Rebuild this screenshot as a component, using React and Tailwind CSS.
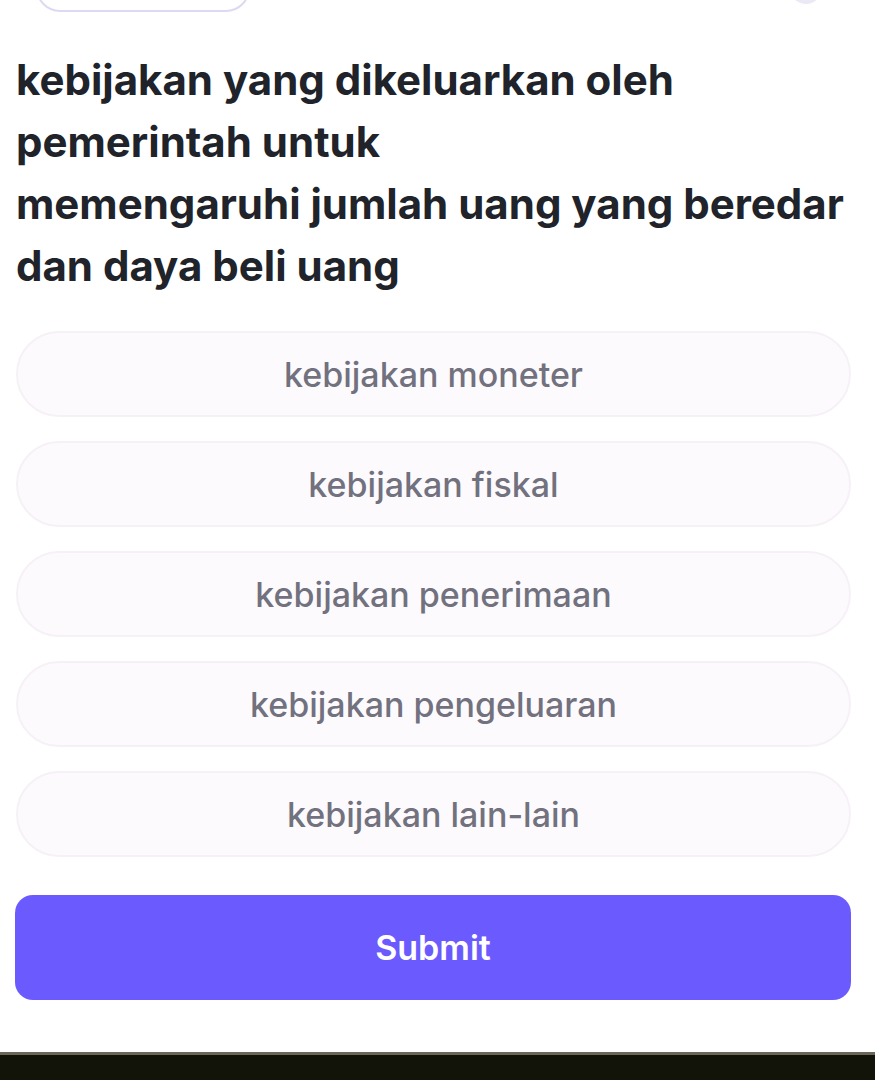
const options = [
  'kebijakan moneter',
  'kebijakan fiskal',
  'kebijakan penerimaan',
  'kebijakan pengeluaran',
  'kebijakan lain-lain',
];

export default function App() {
  return (
    <div
      className="relative flex h-[1080px] w-[875px] flex-col overflow-hidden bg-white"
      style={{ fontFamily: 'Inter, "Noto Sans", sans-serif' }}
    >
      <div className="absolute left-[36px] top-[-60px] h-[72px] w-[214px] rounded-[24px] border-2 border-[#ddd9f3] bg-white" />
      <div className="absolute left-[790px] top-[-28px] h-[32px] w-[32px] rounded-full bg-[#ebe9f5]" />

      <div className="px-[16px] pt-[49px]">
        <h1 className="text-[42px] font-bold leading-[62px] text-[#20232a]">
          kebijakan yang dikeluarkan oleh pemerintah untuk
          <br />
          memengaruhi jumlah uang yang beredar dan daya beli uang
        </h1>
      </div>

      <div className="mt-[34px] flex flex-col gap-[24px] px-[16px]">
        {options.map((o) => (
          <button
            key={o}
            className="flex h-[86px] w-[835px] items-center justify-center rounded-full border-2 border-[#f6f1f6] bg-[#fdfafe] text-[34px] font-medium text-[#72717e]"
          >
            {o}
          </button>
        ))}
      </div>

      <div className="mt-[38px] px-[15px]">
        <button className="flex h-[105px] w-[836px] items-center justify-center rounded-[18px] bg-[#6b5bff] text-[34px] font-semibold text-white">
          Submit
        </button>
      </div>

      <div className="mt-auto h-[28px] border-t-[3px] border-[#6a665a] bg-[#12140a]" />
    </div>
  );
}
